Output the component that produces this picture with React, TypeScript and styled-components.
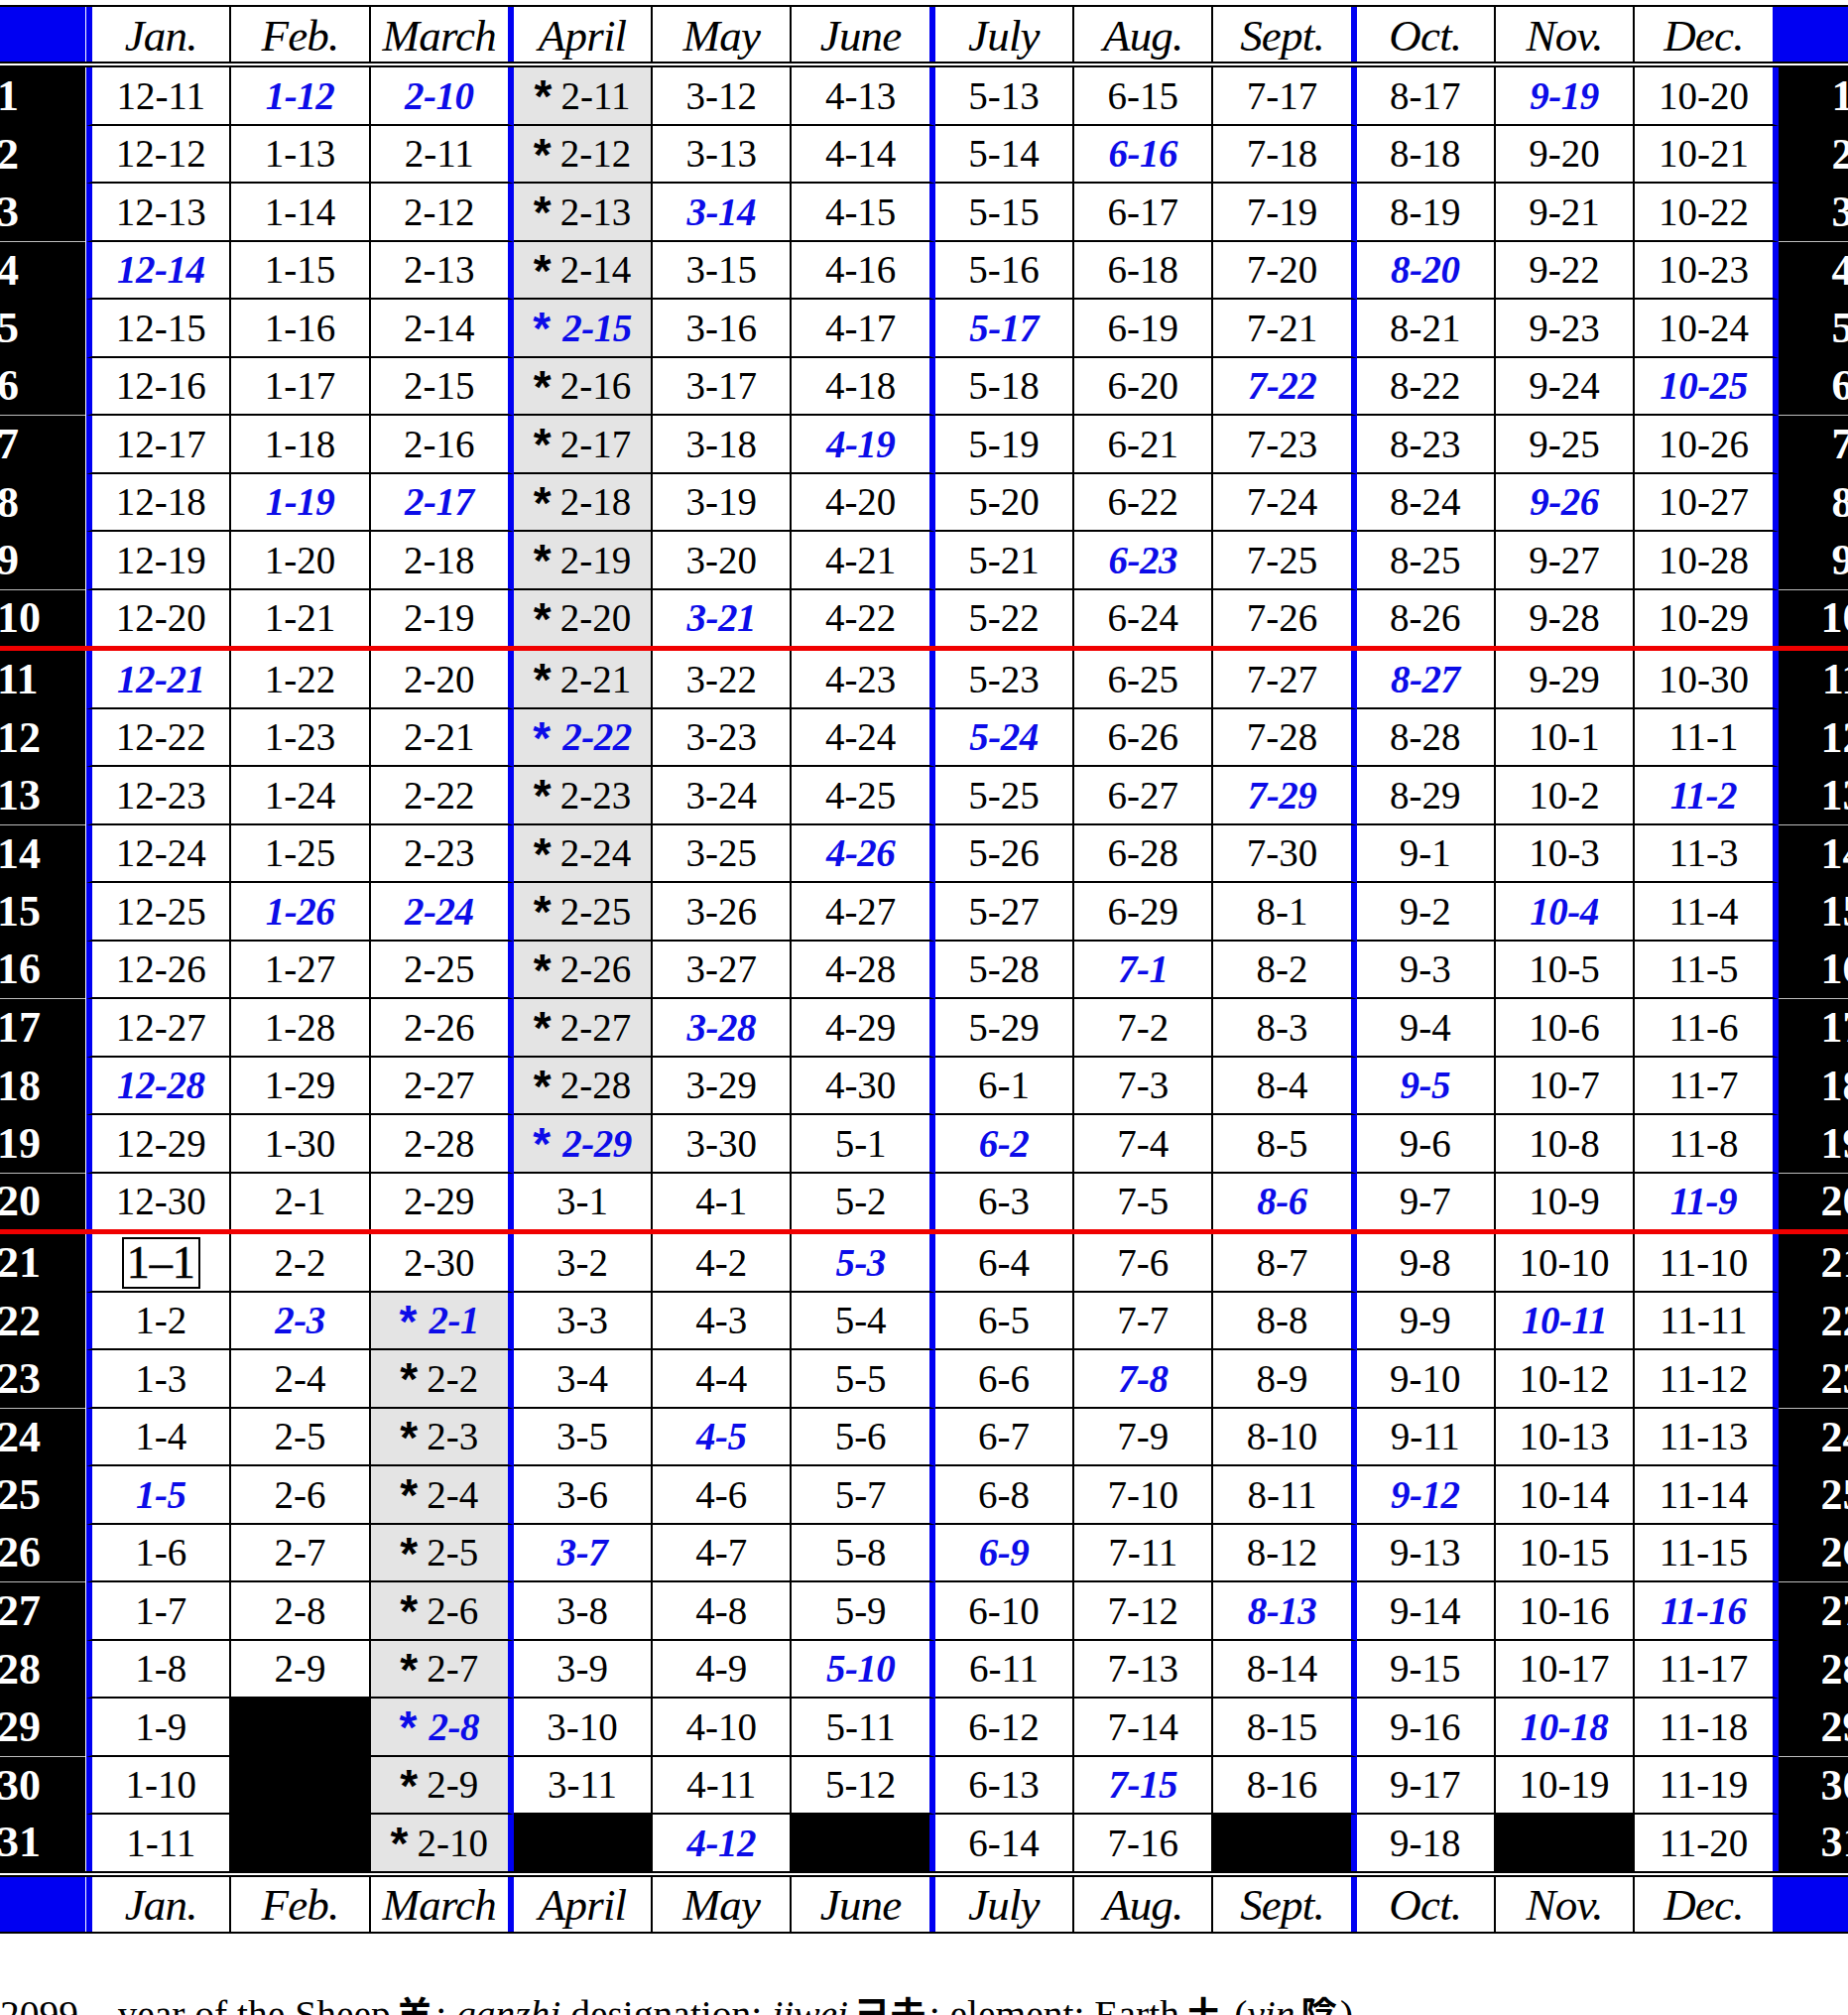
import React from "react";
import styled, { createGlobalStyle } from "styled-components";

const BLUE = "#0000f2";
const TEXT_BLUE = "#0c0ce8";
const RED = "#f00000";
const GRAY = "#e4e4e4";

const Global = createGlobalStyle`
  html, body {
    margin: 0;
    padding: 0;
    background: #ffffff;
    overflow: hidden;
  }
  body {
    font-family: "Liberation Serif", "Times New Roman", serif;
    color: #000;
  }
`;

const MONTHS = ["Jan.", "Feb.", "March", "April", "May", "June", "July", "Aug.", "Sept.", "Oct.", "Nov.", "Dec."];
const MONTH_DAYS = [31, 28, 31, 30, 31, 30, 31, 31, 30, 31, 30, 31];
const MONTH_OFFSET = MONTH_DAYS.reduce<number[]>((acc, d, i) => {
  acc.push(i === 0 ? 0 : acc[i - 1] + MONTH_DAYS[i - 1]);
  return acc;
}, []);

type Lunar = { start: number; month: number; leap?: boolean };
const LUNAR: Lunar[] = [
  { start: -9, month: 12 },
  { start: 21, month: 1 },
  { start: 51, month: 2 },
  { start: 81, month: 2, leap: true },
  { start: 110, month: 3 },
  { start: 140, month: 4 },
  { start: 170, month: 5 },
  { start: 199, month: 6 },
  { start: 228, month: 7 },
  { start: 258, month: 8 },
  { start: 287, month: 9 },
  { start: 316, month: 10 },
  { start: 346, month: 11 },
];

type CellInfo =
  | { kind: "void" }
  | { kind: "date"; text: string; leap: boolean; sunday: boolean; newYear: boolean };

function cellInfo(monthIdx: number, day: number): CellInfo {
  if (day > MONTH_DAYS[monthIdx]) return { kind: "void" };
  const doy = MONTH_OFFSET[monthIdx] + day;
  let cur = LUNAR[0];
  for (const l of LUNAR) if (l.start <= doy) cur = l;
  const lday = doy - cur.start + 1;
  return {
    kind: "date",
    text: `${cur.month}-${lday}`,
    leap: !!cur.leap,
    sunday: (doy + 3) % 7 === 0,
    newYear: doy === 21,
  };
}

const SEPARATED_ROWS = new Set([3, 6, 9, 13, 16, 19, 23, 26, 29]);

/* ---------- layout ---------- */

const Page = styled.div`
  padding-top: 5px;
  width: 1923px;
`;

const Table = styled.div`
  display: flex;
  flex-direction: column;
  width: 1923px;
`;

const Rule = styled.div`
  height: 2px;
  background: #000;
`;

const DoubleRule = styled.div`
  height: 2px;
  border-top: 2px solid #000;
  border-bottom: 2px solid #000;
  background: #fff;
`;

const RedRule = styled.div`
  height: 5px;
  background: ${RED};
`;

const Row = styled.div<{ $height: number }>`
  display: flex;
  height: ${(p) => p.$height}px;
`;

const SideCell = styled.div<{ $side: "left" | "right"; $band: "edge" | "body"; $sep?: boolean }>`
  flex: none;
  box-sizing: border-box;
  width: ${(p) => (p.$side === "left" ? "86px" : "130px")};
  margin-right: ${(p) => (p.$side === "left" ? "1px" : "0")};
  background: ${(p) => (p.$band === "edge" ? BLUE : "#000")};
  border-bottom: ${(p) => (p.$sep ? "1px solid #bdbdbd" : "none")};
  color: #fff;
  display: flex;
  align-items: center;
  justify-content: ${(p) => (p.$side === "left" ? "flex-start" : "center")};
  font-family: "Liberation Serif", serif;
  font-size: 44px;
  font-weight: 700;
  line-height: 1;
`;

const LeftLabel = styled.span`
  margin-left: -3px;
`;

const MonthCell = styled.div<{
  $first?: boolean;
  $quarterEnd?: boolean;
  $bottom?: boolean;
  $tone: "plain" | "gray" | "void";
}>`
  flex: none;
  box-sizing: content-box;
  width: 138.3px;
  border-left: ${(p) => (p.$first ? `6px solid ${BLUE}` : "none")};
  border-right: ${(p) => (p.$quarterEnd ? `6px solid ${BLUE}` : "2px solid #000")};
  border-bottom: ${(p) => (p.$bottom ? "2px solid #000" : "none")};
  background: ${(p) => (p.$tone === "gray" ? GRAY : p.$tone === "void" ? "#000" : "#fff")};
  display: flex;
  align-items: center;
  justify-content: center;
  white-space: nowrap;
`;

const MonthName = styled.span`
  font-family: "Liberation Serif", serif;
  font-style: italic;
  font-size: 45px;
  letter-spacing: -0.8px;
  line-height: 1;
  padding-top: 3px;
`;

const DateText = styled.span<{ $sunday: boolean }>`
  font-family: "Liberation Serif", serif;
  font-size: 39px;
  line-height: 1;
  color: ${(p) => (p.$sunday ? TEXT_BLUE : "#000")};
  font-style: ${(p) => (p.$sunday ? "italic" : "normal")};
  font-weight: ${(p) => (p.$sunday ? 700 : 400)};
  letter-spacing: ${(p) => (p.$sunday ? "-0.5px" : "0")};
`;

const Star = styled.span<{ $sunday: boolean }>`
  font-family: "Liberation Sans", "DejaVu Sans", sans-serif;
  font-weight: 700;
  font-style: normal;
  font-size: 46px;
  line-height: 1;
  color: ${(p) => (p.$sunday ? TEXT_BLUE : "#000")};
  margin-right: ${(p) => (p.$sunday ? "12px" : "9px")};
  position: relative;
  top: 1px;
`;

const NewYearBox = styled.span`
  font-family: "Liberation Serif", serif;
  font-size: 46px;
  line-height: 48px;
  padding: 0 3px;
  border: 2px solid #000;
  margin-top: 2px;
  -webkit-text-stroke: 0.6px #000;
`;

const Caption = styled.p`
  margin: 59px 0 0 0;
  font-family: "Liberation Serif", serif;
  font-size: 39.5px;
  line-height: 46px;
  white-space: nowrap;
`;

const Han = styled.span`
  font-family: "Noto Sans CJK JP", "Noto Sans CJK SC", sans-serif;
  font-weight: 700;
  font-size: 0.92em;
  line-height: 1;
  margin: 0 3px 0 6px;
`;

/* ---------- parts ---------- */

function EdgeRow() {
  return (
    <Row $height={55}>
      <SideCell $side="left" $band="edge" />
      {MONTHS.map((m, i) => (
        <MonthCell key={m} $first={i === 0} $quarterEnd={i % 3 === 2} $tone="plain">
          <MonthName>{m}</MonthName>
        </MonthCell>
      ))}
      <SideCell $side="right" $band="edge" />
    </Row>
  );
}

function DateCell({ info }: { info: CellInfo }) {
  if (info.kind === "void") return null;
  if (info.newYear) return <NewYearBox>1–1</NewYearBox>;
  return (
    <>
      {info.leap && <Star $sunday={info.sunday}>*</Star>}
      <DateText $sunday={info.sunday}>{info.text}</DateText>
    </>
  );
}

function DayRow({ day, bottom }: { day: number; bottom: boolean }) {
  const sep = SEPARATED_ROWS.has(day);
  return (
    <Row $height={bottom ? 58.5 : 56.5}>
      <SideCell $side="left" $band="body" $sep={sep}>
        <LeftLabel>{day}</LeftLabel>
      </SideCell>
      {MONTHS.map((m, i) => {
        const info = cellInfo(i, day);
        const tone = info.kind === "void" ? "void" : info.leap ? "gray" : "plain";
        return (
          <MonthCell
            key={m}
            $first={i === 0}
            $quarterEnd={i % 3 === 2}
            $bottom={bottom}
            $tone={tone}
          >
            <DateCell info={info} />
          </MonthCell>
        );
      })}
      <SideCell $side="right" $band="body" $sep={sep}>
        {day}
      </SideCell>
    </Row>
  );
}

function Segment({ from, to }: { from: number; to: number }) {
  const rows = [];
  for (let d = from; d <= to; d++) rows.push(<DayRow key={d} day={d} bottom={d !== to} />);
  return <>{rows}</>;
}

export default function App() {
  return (
    <Page>
      <Global />
      <Table>
        <Rule />
        <EdgeRow />
        <DoubleRule />
        <Segment from={1} to={10} />
        <RedRule />
        <Segment from={11} to={20} />
        <RedRule />
        <Segment from={21} to={31} />
        <DoubleRule />
        <EdgeRow />
        <Rule />
      </Table>
      <Caption>
        2099 – year of the Sheep<Han>羊</Han>; <i>ganzhi</i> designation: <i>jiwei</i>
        <Han>己未</Han>; element: Earth<Han>土</Han> (<i>yin</i>
        <Han>陰</Han>)
      </Caption>
    </Page>
  );
}
